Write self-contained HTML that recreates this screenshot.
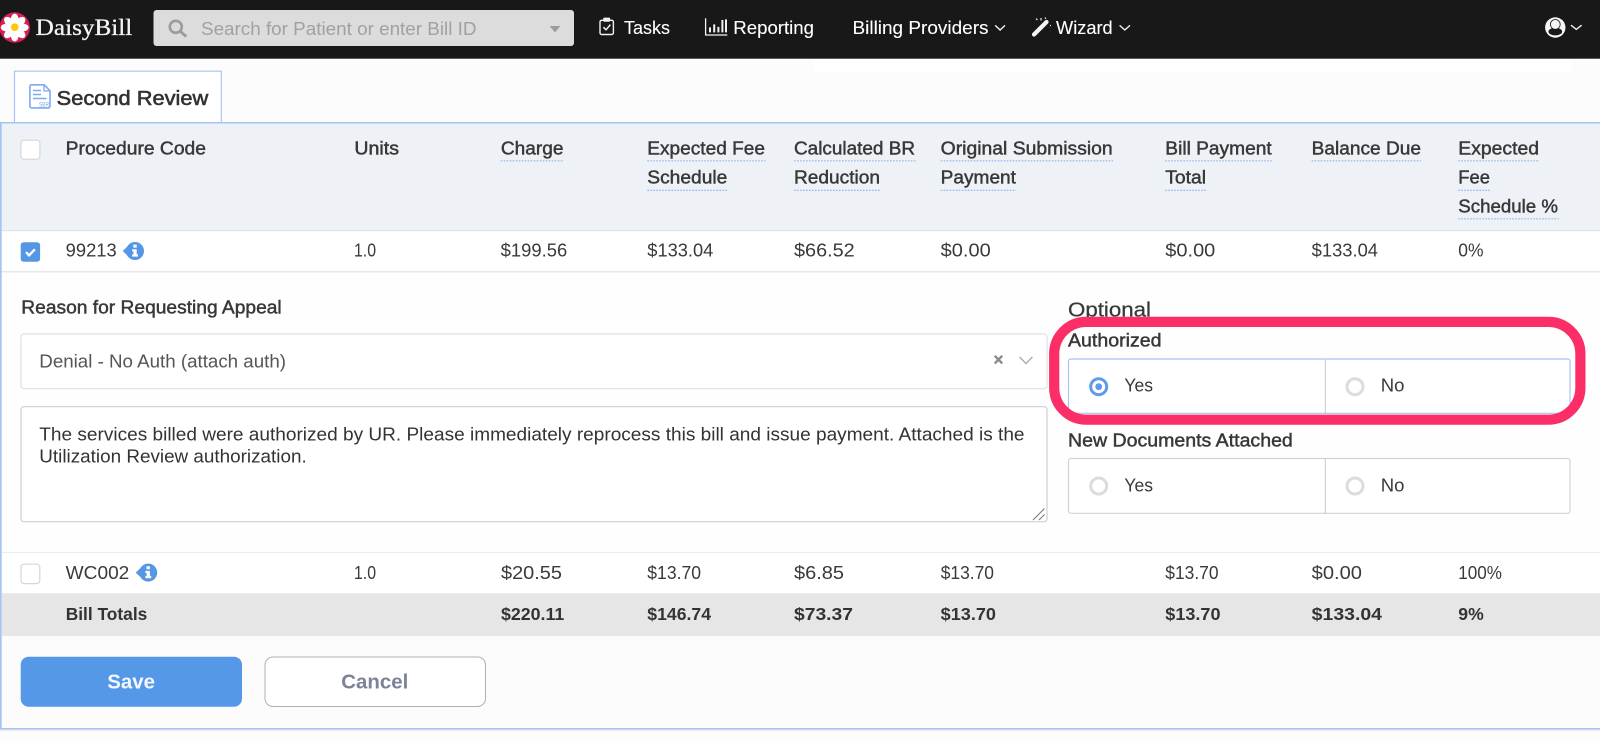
<!DOCTYPE html>
<html lang="en">
<head>
<meta charset="utf-8">
<title>DaisyBill - Second Review</title>
<style>
html,body{margin:0;padding:0;background:#fcfcfc;width:1600px;height:741px;overflow:hidden}
svg{display:block}
text{font-family:"Liberation Sans",Arial,sans-serif;fill:#333}
.n{font-size:18.5px;fill:#fff;stroke:#fff;stroke-width:.1}
.h{font-size:18px;fill:#383838;stroke:#383838;stroke-width:.45}
.r{font-size:18px;fill:#3a3a3a}
.b{font-size:17.5px;font-weight:bold;fill:#333}
.l{font-size:18px;fill:#383838;stroke:#383838;stroke-width:.45}
.t{font-size:18px;fill:#333}
.u{stroke:#8fb5ef;stroke-width:1.2;stroke-dasharray:1.6 1.4;fill:none}
</style>
</head>
<body>
<svg width="1600" height="741" viewBox="0 0 1600 741" xmlns="http://www.w3.org/2000/svg">
<rect width="1600" height="741" fill="#fcfcfc"/>
<!-- top bar -->
<rect width="1600" height="58.7" fill="#181818"/>
<rect x="813" y="59" width="759" height="13" fill="#fff"/>
<!-- logo -->
<circle cx="14.7" cy="27.5" r="15.2" fill="#d81e52"/>
<g fill="#fff">
<ellipse cx="14.7" cy="19.6" rx="3.9" ry="6"/>
<ellipse cx="14.7" cy="19.6" rx="3.9" ry="6" transform="rotate(45 14.7 27.5)"/>
<ellipse cx="14.7" cy="19.6" rx="3.9" ry="6" transform="rotate(90 14.7 27.5)"/>
<ellipse cx="14.7" cy="19.6" rx="3.9" ry="6" transform="rotate(135 14.7 27.5)"/>
<ellipse cx="14.7" cy="19.6" rx="3.9" ry="6" transform="rotate(180 14.7 27.5)"/>
<ellipse cx="14.7" cy="19.6" rx="3.9" ry="6" transform="rotate(225 14.7 27.5)"/>
<ellipse cx="14.7" cy="19.6" rx="3.9" ry="6" transform="rotate(270 14.7 27.5)"/>
<ellipse cx="14.7" cy="19.6" rx="3.9" ry="6" transform="rotate(315 14.7 27.5)"/>
</g>
<circle cx="14.7" cy="27.2" r="3.8" fill="#ffc60a"/>
<text x="35.7" y="35" textLength="96.6" lengthAdjust="spacingAndGlyphs" style="font-family:'Liberation Serif',serif;font-size:23.5px;fill:#f4f4f4;stroke:#f4f4f4;stroke-width:.3">DaisyBill</text>
<!-- search -->
<rect x="153.5" y="10" width="420.5" height="36" rx="3" fill="#dcdcdc"/>
<circle cx="175.8" cy="26.8" r="6" fill="none" stroke="#9b9b9b" stroke-width="2.6"/>
<path d="M180.3 31.3L186.2 36.6" stroke="#9b9b9b" stroke-width="2.8" fill="none"/>
<text x="201" y="35" textLength="275.5" lengthAdjust="spacingAndGlyphs" style="font-size:18.5px;fill:#a1a1a1">Search for Patient or enter Bill ID</text>
<path d="M549.6 26H560.4L555 32.4Z" fill="#9c9c9c"/>
<!-- nav -->
<g fill="none" stroke="#f2f2f2">
<rect x="600" y="20.3" width="13.4" height="14.2" rx="1.6" stroke-width="1.4"/>
<rect x="603.6" y="18" width="6.2" height="3.4" rx=".8" fill="#f2f2f2" stroke-width=".8"/>
<path d="M603.4 27.2l2.6 2.6 4.4-5.2" stroke-width="1.5"/>
<path d="M705.6 18.3V35h21.7" stroke-width="1.3"/>
<path d="M710 32.4v-5M714.2 32.4v-8M718.4 32.4v-5.5M722.4 32.4v-12.4M726 32.4v-13" stroke-width="2"/>
<path d="M995.2 25.4l4.9 4.6 4.9-4.6M1119.6 25.4l5.2 4.6 5.2-4.6M1571 25.2l5.3 4.2 5.3-4.2" stroke-width="1.4"/>
</g>
<text class="n" x="624" y="34" textLength="46" lengthAdjust="spacingAndGlyphs">Tasks</text>
<text class="n" x="733.3" y="34" textLength="80.7" lengthAdjust="spacingAndGlyphs">Reporting</text>
<text class="n" x="852.5" y="34" textLength="136" lengthAdjust="spacingAndGlyphs">Billing Providers</text>
<text class="n" x="1056" y="34" textLength="56.7" lengthAdjust="spacingAndGlyphs">Wizard</text>
<path d="M1034 34.5L1046.5 22" stroke="#f4f4f4" stroke-width="4.2" stroke-linecap="round"/>
<path d="M1036 18.5l1.5 1.5M1041 18v2.5M1045 17.5l.8 1.3M1050 25.5h1" stroke="#e8e8e8" stroke-width="1.2"/>
<circle cx="1555.3" cy="27.5" r="10.2" fill="#f6f6f6"/>
<ellipse cx="1555.3" cy="31.6" rx="6.8" ry="3.8" fill="#181818"/>
<circle cx="1555.3" cy="24.4" r="4.9" fill="#f6f6f6" stroke="#181818" stroke-width=".8"/>

<!-- tab -->
<path d="M14.5 123V71.2H221.3V123" fill="#fff" stroke="#a6c4f5" stroke-width="1.2"/>
<g fill="none" stroke="#7fa9ee" stroke-width="1.6">
<path d="M31.4 84.8H44.2L50 90.8V106.4a1.5 1.5 0 0 1-1.5 1.5H31.4a1.5 1.5 0 0 1-1.5-1.5V86.3a1.5 1.5 0 0 1 1.5-1.5Z"/>
<path d="M44 85V91H50" stroke-width="1.3"/>
<path d="M33 90.5H41M33 94.5H41M33 98.5H46.5" stroke-width="1.4"/>
</g>
<text x="39" y="106.4" textLength="10" lengthAdjust="spacingAndGlyphs" style="font-size:6px;fill:#7fa9ee">SBR</text>
<text x="56.7" y="105" textLength="151.6" lengthAdjust="spacingAndGlyphs" style="font-size:20.5px;fill:#333;stroke:#333;stroke-width:.6">Second Review</text>

<!-- table head -->
<rect x="1" y="123" width="1599" height="108" fill="#eef1f6"/>
<rect x="0" y="122" width="1600" height="1.5" fill="#a6c4f5"/>
<rect x="1" y="230" width="1599" height="1.3" fill="#e1e3e7"/>
<rect x="20.9" y="140.2" width="19" height="19" rx="3" fill="#fff" stroke="#d6d6d6" stroke-width="1.2"/>
<text class="h" x="65.7" y="154.4" textLength="140.3" lengthAdjust="spacingAndGlyphs">Procedure Code</text>
<text class="h" x="354.4" y="154.4" textLength="44.6" lengthAdjust="spacingAndGlyphs">Units</text>
<text class="h" x="500.9" y="154.4" textLength="62.6" lengthAdjust="spacingAndGlyphs">Charge</text>
<text class="h" x="647.3" y="154.4" textLength="117.7" lengthAdjust="spacingAndGlyphs">Expected Fee</text>
<text class="h" x="647.3" y="183.4" textLength="80" lengthAdjust="spacingAndGlyphs">Schedule</text>
<text class="h" x="794" y="154.4" textLength="121" lengthAdjust="spacingAndGlyphs">Calculated BR</text>
<text class="h" x="794" y="183.4" textLength="86" lengthAdjust="spacingAndGlyphs">Reduction</text>
<text class="h" x="940.7" y="154.4" textLength="172" lengthAdjust="spacingAndGlyphs">Original Submission</text>
<text class="h" x="940.7" y="183.4" textLength="75.3" lengthAdjust="spacingAndGlyphs">Payment</text>
<text class="h" x="1165.3" y="154.4" textLength="106.4" lengthAdjust="spacingAndGlyphs">Bill Payment</text>
<text class="h" x="1165.3" y="183.4" textLength="40.7" lengthAdjust="spacingAndGlyphs">Total</text>
<text class="h" x="1311.7" y="154.4" textLength="109.3" lengthAdjust="spacingAndGlyphs">Balance Due</text>
<text class="h" x="1458.3" y="154.4" textLength="80.7" lengthAdjust="spacingAndGlyphs">Expected</text>
<text class="h" x="1458.3" y="183.4" textLength="31.7" lengthAdjust="spacingAndGlyphs">Fee</text>
<text class="h" x="1458.3" y="212.7" textLength="99.7" lengthAdjust="spacingAndGlyphs">Schedule %</text>
<path class="u" d="M500.7 160.8H564M647.3 160.8H765.5M794 160.8H915.5M940.7 160.8H1113M1165.3 160.8H1272M1311.7 160.8H1421M1458.3 160.8H1539.5"/>
<path class="u" d="M647.3 190.4H728M794 190.4H880.5M940.7 190.4H1016M1165.3 190.4H1206.5M1458.3 190.4H1490"/>
<path class="u" d="M1458.3 218.8H1558.5"/>

<!-- row 99213 -->
<rect x="1.5" y="231.3" width="1598.5" height="40" fill="#fff"/>
<rect x="1.5" y="271" width="1598.5" height="1.5" fill="#e8e8e8"/>
<rect x="20.7" y="242.3" width="19.4" height="19.4" rx="3" fill="#5596e6"/>
<path d="M26 252.2l3.1 3.1 5.8-6" fill="none" stroke="#fff" stroke-width="2.3"/>
<text class="r" x="65.7" y="256.7" textLength="51" lengthAdjust="spacingAndGlyphs">99213</text>
<g fill="#5596e6">
<circle cx="135" cy="251" r="9"/>
<path d="M122.7 251L130.5 243.5V258.5Z"/>
</g>
<path d="M133.3 244.6h3.4v3h-3.4zM132.2 249.3h4.5v5h1.3v2.3h-5.8v-2.3h1.3v-2.8h-1.3z" fill="#fff"/>
<text class="r" x="354" y="256.7" textLength="22" lengthAdjust="spacingAndGlyphs">1.0</text>
<text class="r" x="500.7" y="256.7" textLength="66.6" lengthAdjust="spacingAndGlyphs">$199.56</text>
<text class="r" x="647.3" y="256.7" textLength="66" lengthAdjust="spacingAndGlyphs">$133.04</text>
<text class="r" x="794" y="256.7" textLength="60.7" lengthAdjust="spacingAndGlyphs">$66.52</text>
<text class="r" x="940.7" y="256.7" textLength="50" lengthAdjust="spacingAndGlyphs">$0.00</text>
<text class="r" x="1165.3" y="256.7" textLength="50" lengthAdjust="spacingAndGlyphs">$0.00</text>
<text class="r" x="1311.7" y="256.7" textLength="66.3" lengthAdjust="spacingAndGlyphs">$133.04</text>
<text class="r" x="1458.3" y="256.7" textLength="25.2" lengthAdjust="spacingAndGlyphs">0%</text>

<!-- expanded form -->
<rect x="1.5" y="272.5" width="1598.5" height="280" fill="#fefefe"/>
<text class="l" x="21.3" y="313.3" textLength="260.4" lengthAdjust="spacingAndGlyphs">Reason for Requesting Appeal</text>
<rect x="21" y="334" width="1026" height="54.7" rx="3" fill="#fff" stroke="#e0e0e0" stroke-width="1.2"/>
<text x="39.3" y="367.7" textLength="246.7" lengthAdjust="spacingAndGlyphs" style="font-size:18px;fill:#555">Denial - No Auth (attach auth)</text>
<path d="M994.8 355.8l7.4 7.6M1002.2 355.8l-7.4 7.6" stroke="#8a8a8a" stroke-width="2.4" fill="none"/>
<path d="M1019.6 357l6.4 6.6 6.4-6.6" stroke="#a8a8a8" stroke-width="1.3" fill="none"/>
<rect x="21" y="406.7" width="1026" height="115" rx="3" fill="#fff" stroke="#cfcfcf" stroke-width="1.2"/>
<text class="t" x="39.3" y="440.7" textLength="985.2" lengthAdjust="spacingAndGlyphs">The services billed were authorized by UR. Please immediately reprocess this bill and issue payment. Attached is the</text>
<text class="t" x="39.3" y="462.7" textLength="267.4" lengthAdjust="spacingAndGlyphs">Utilization Review authorization.</text>
<path d="M1033 520L1044.5 508.5M1039 520L1044.5 514.5" stroke="#777" stroke-width="1" fill="none"/>

<text x="1068" y="316.7" textLength="83" lengthAdjust="spacingAndGlyphs" style="font-size:20px;fill:#383838;stroke:#383838;stroke-width:.25">Optional</text>
<text class="l" x="1068" y="346.7" textLength="93.5" lengthAdjust="spacingAndGlyphs">Authorized</text>
<rect x="1068.5" y="359" width="501.5" height="54.3" rx="2.5" fill="#fff" stroke="#a6c4f5" stroke-width="1.2"/>
<rect x="1324.8" y="359" width="1" height="54.3" fill="#c9c9c9"/>
<circle cx="1098.7" cy="386.7" r="8" fill="#fff" stroke="#5f9bea" stroke-width="3"/>
<circle cx="1098.7" cy="386.7" r="3.4" fill="#5f9bea"/>
<text class="r" x="1124.4" y="391.7" textLength="28.6" lengthAdjust="spacingAndGlyphs">Yes</text>
<circle cx="1355" cy="386.7" r="8" fill="#fff" stroke="#dcdcdc" stroke-width="3"/>
<text class="r" x="1380.8" y="391.7" textLength="23.7" lengthAdjust="spacingAndGlyphs">No</text>

<text class="l" x="1068" y="446.7" textLength="224.8" lengthAdjust="spacingAndGlyphs">New Documents Attached</text>
<rect x="1068.5" y="458.5" width="501.5" height="54.8" rx="2.5" fill="#fff" stroke="#d2d2d2" stroke-width="1.2"/>
<rect x="1324.8" y="458.5" width="1" height="54.8" fill="#c9c9c9"/>
<circle cx="1098.7" cy="486" r="8" fill="#fff" stroke="#dcdcdc" stroke-width="3"/>
<text class="r" x="1124.4" y="491.7" textLength="28.6" lengthAdjust="spacingAndGlyphs">Yes</text>
<circle cx="1355" cy="486" r="8" fill="#fff" stroke="#dcdcdc" stroke-width="3"/>
<text class="r" x="1380.8" y="491.7" textLength="23.7" lengthAdjust="spacingAndGlyphs">No</text>

<!-- highlight -->
<rect x="1054.2" y="321.9" width="526.2" height="97.8" rx="32" fill="none" stroke="#fb2e67" stroke-width="10.2"/>

<!-- row WC002 -->
<rect x="1.5" y="552.2" width="1598.5" height="41" fill="#fff"/>
<rect x="1.5" y="552" width="1598.5" height="1" fill="#ececec"/>
<rect x="21" y="564.2" width="18.8" height="19.4" rx="3" fill="#fff" stroke="#d6d6d6" stroke-width="1.2"/>
<text class="r" x="65.7" y="579" textLength="63.6" lengthAdjust="spacingAndGlyphs">WC002</text>
<g fill="#5596e6">
<circle cx="148.2" cy="572.6" r="9"/>
<path d="M135.7 572.6L143.7 565V580Z"/>
</g>
<path d="M146.5 566.2h3.4v3h-3.4zM145.4 570.9h4.5v5h1.3v2.3h-5.8v-2.3h1.3v-2.8h-1.3z" fill="#fff"/>
<text class="r" x="354" y="579" textLength="22" lengthAdjust="spacingAndGlyphs">1.0</text>
<text class="r" x="501" y="579" textLength="61" lengthAdjust="spacingAndGlyphs">$20.55</text>
<text class="r" x="647.3" y="579" textLength="53.7" lengthAdjust="spacingAndGlyphs">$13.70</text>
<text class="r" x="794" y="579" textLength="50" lengthAdjust="spacingAndGlyphs">$6.85</text>
<text class="r" x="940.7" y="579" textLength="53.3" lengthAdjust="spacingAndGlyphs">$13.70</text>
<text class="r" x="1165.3" y="579" textLength="53.2" lengthAdjust="spacingAndGlyphs">$13.70</text>
<text class="r" x="1311.7" y="579" textLength="50.3" lengthAdjust="spacingAndGlyphs">$0.00</text>
<text class="r" x="1458.3" y="579" textLength="43.7" lengthAdjust="spacingAndGlyphs">100%</text>

<!-- totals -->
<rect x="2" y="593.2" width="1598" height="42.8" fill="#e6e6e6"/>
<text class="b" x="65.7" y="619.8" textLength="81.6" lengthAdjust="spacingAndGlyphs">Bill Totals</text>
<text class="b" x="501" y="619.8" textLength="63.3" lengthAdjust="spacingAndGlyphs">$220.11</text>
<text class="b" x="647.3" y="619.8" textLength="63.7" lengthAdjust="spacingAndGlyphs">$146.74</text>
<text class="b" x="794" y="619.8" textLength="59" lengthAdjust="spacingAndGlyphs">$73.37</text>
<text class="b" x="940.7" y="619.8" textLength="55.3" lengthAdjust="spacingAndGlyphs">$13.70</text>
<text class="b" x="1165.3" y="619.8" textLength="55.2" lengthAdjust="spacingAndGlyphs">$13.70</text>
<text class="b" x="1311.7" y="619.8" textLength="70.3" lengthAdjust="spacingAndGlyphs">$133.04</text>
<text class="b" x="1458.3" y="619.8" textLength="25.4" lengthAdjust="spacingAndGlyphs">9%</text>

<!-- buttons -->
<rect x="20.7" y="656.7" width="221.3" height="50" rx="8" fill="#5598e8"/>
<text x="107.3" y="688.3" textLength="47.7" lengthAdjust="spacingAndGlyphs" style="font-size:20.5px;font-weight:bold;fill:#f4f8fe">Save</text>
<rect x="265" y="657" width="220.5" height="49.5" rx="8" fill="#fff" stroke="#afafb8" stroke-width="1"/>
<text x="341.3" y="688.3" textLength="67" lengthAdjust="spacingAndGlyphs" style="font-size:20.5px;font-weight:bold;fill:#7c8398">Cancel</text>

<!-- panel edges -->
<rect x="0" y="122" width="1.7" height="607" fill="#a6c4f5"/>
<rect x="0" y="728" width="1600" height="1.6" fill="#a6c4f5"/>
<rect x="0" y="729.6" width="1600" height="1.6" fill="#ededed"/>
</svg>
</body>
</html>
